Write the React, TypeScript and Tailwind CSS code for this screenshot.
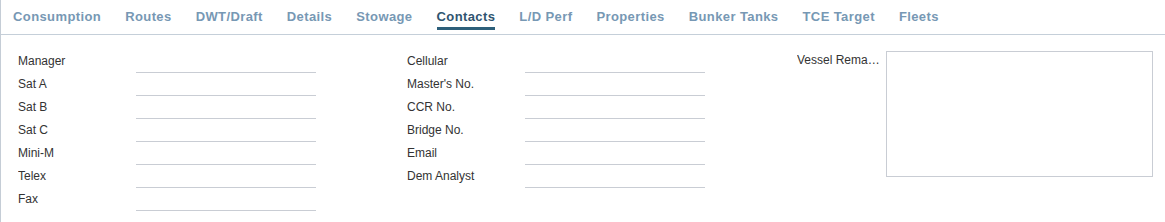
const tabs = [
  'Consumption',
  'Routes',
  'DWT/Draft',
  'Details',
  'Stowage',
  'Contacts',
  'L/D Perf',
  'Properties',
  'Bunker Tanks',
  'TCE Target',
  'Fleets',
];

const leftFields = ['Manager', 'Sat A', 'Sat B', 'Sat C', 'Mini-M', 'Telex', 'Fax'];
const midFields = ['Cellular', "Master's No.", 'CCR No.', 'Bridge No.', 'Email', 'Dem Analyst'];

function Field({ label }: { label: string }) {
  return (
    <div className="flex items-center h-[23px]">
      <label className="w-[118px] shrink-0 truncate pb-[2px]">{label}</label>
      <input
        type="text"
        className="w-[180px] h-[23px] border-b border-[#c9cdd4] bg-transparent outline-none text-[12px]"
      />
    </div>
  );
}

export default function App() {
  return (
    <div
      className="w-[1165px] h-[222px] bg-white border-l border-[#c5cdd6] text-[12px] text-[#333333] overflow-hidden"
      style={{ fontFamily: '"Liberation Sans", Arial, sans-serif' }}
    >
      {/* Tabs */}
      <div className="flex h-[35px] border-b border-[#c5cfd9]">
        {tabs.map((tab) => {
          const active = tab === 'Contacts';
          return (
            <div key={tab} className="flex flex-col items-stretch px-3 pt-[9px] cursor-pointer">
              <span
                className={`text-[13px] leading-4 font-bold tracking-[0.4px] whitespace-nowrap ${
                  active ? 'text-[#2f5470]' : 'text-[#7798b4]'
                }`}
              >
                {tab}
              </span>
              <span className={`mt-[2px] h-[3px] ${active ? 'bg-[#2d5f7a]' : 'bg-transparent'}`} />
            </div>
          );
        })}
      </div>

      {/* Content */}
      <div className="grid grid-cols-3 pt-[15px]">
        <div className="pl-[17px] flex flex-col">
          {leftFields.map((f) => (
            <Field key={f} label={f} />
          ))}
        </div>
        <div className="pl-[18px] flex flex-col">
          {midFields.map((f) => (
            <Field key={f} label={f} />
          ))}
        </div>
        <div className="pl-[20px] flex items-start">
          <label className="w-[89px] shrink-0 h-[23px] leading-[21px] truncate pr-[4px]">Vessel Remarks</label>
          <textarea className="w-[267px] h-[126px] mt-px border border-[#c9cdd4] resize-none outline-none" />
        </div>
      </div>
    </div>
  );
}
